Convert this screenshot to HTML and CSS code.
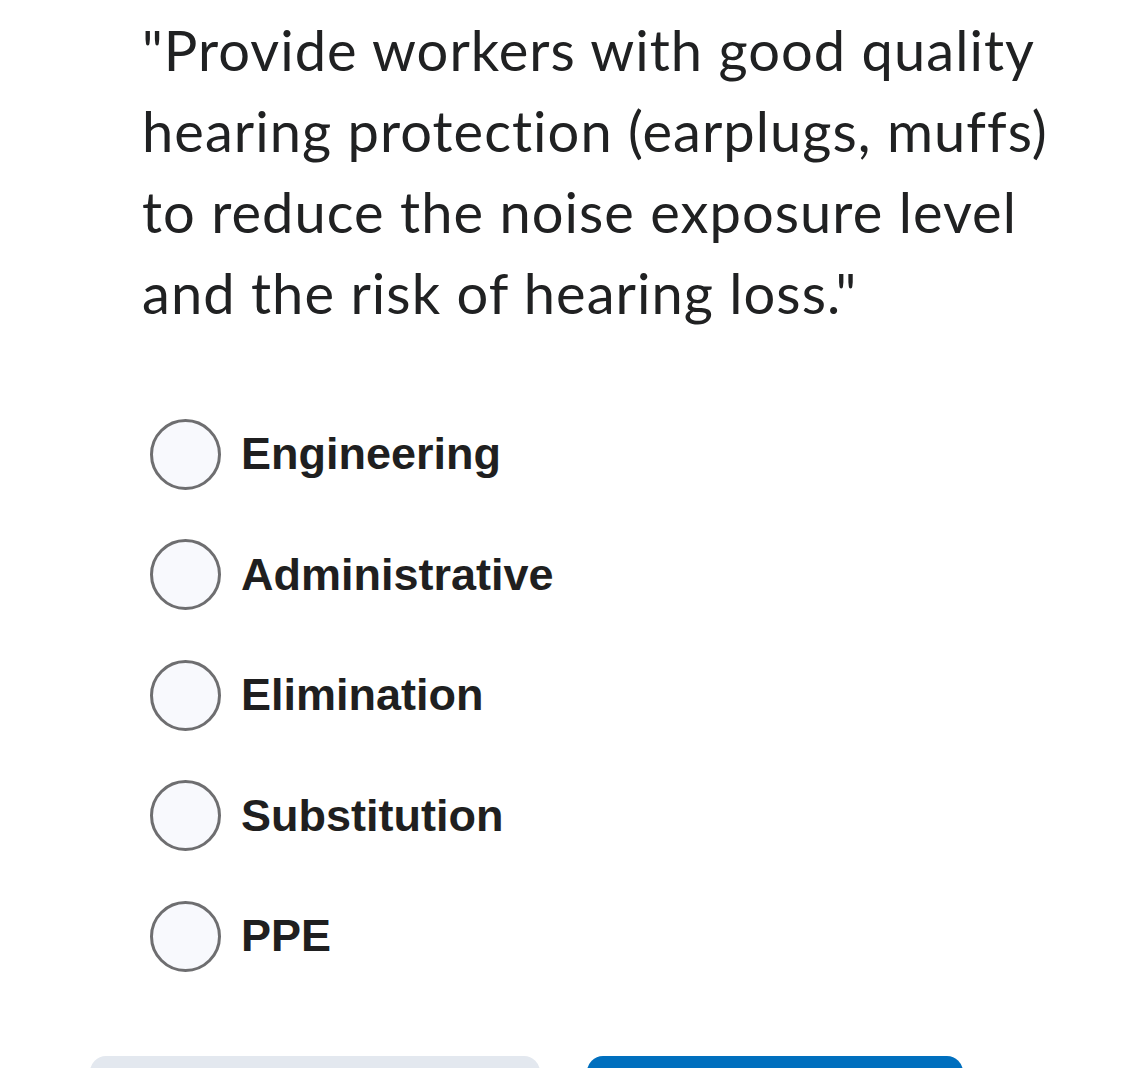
FILE: index.html
```html
<!DOCTYPE html>
<html lang="en">
<head>
<meta charset="utf-8">
<title>Question</title>
<link rel="stylesheet" href="styles.css">
</head>
<body>
<main class="page">
  <p class="question">"Provide workers with good quality hearing protection (earplugs, muffs) to reduce the noise exposure level and the risk of hearing loss."</p>
  <ul class="options">
    <li class="option"><span class="radio"></span><span class="label">Engineering</span></li>
    <li class="option"><span class="radio"></span><span class="label">Administrative</span></li>
    <li class="option"><span class="radio"></span><span class="label">Elimination</span></li>
    <li class="option"><span class="radio"></span><span class="label">Substitution</span></li>
    <li class="option"><span class="radio"></span><span class="label">PPE</span></li>
  </ul>
  <div class="actions">
    <button class="btn btn-secondary" type="button"></button>
    <button class="btn btn-primary" type="button"></button>
  </div>
</main>
</body>
</html>
```
FILE: styles.css
```css
html, body {
  margin: 0;
  padding: 0;
  background: #ffffff;
  overflow: hidden;
}
.page {
  padding: 9px 0 0 142px;
  height: 1068px;
  box-sizing: border-box;
}
.question {
  margin: 0;
  width: 960px;
  font-family: Lato, "Liberation Sans", sans-serif;
  font-size: 56px;
  line-height: 81px;
  letter-spacing: 1.05px;
  font-variant-ligatures: none;
  color: #202122;
}
.options {
  list-style: none;
  margin: 61px 0 0 0;
  padding: 0;
}
.option {
  display: flex;
  align-items: center;
  height: 120.5px;
  gap: 20px;
  margin-left: 8px;
}
.radio {
  width: 65px;
  height: 65px;
  border: 3px solid #6e6e70;
  border-radius: 50%;
  background: #f8f9fd;
  flex: none;
}
.label {
  font-family: "Liberation Sans", Arial, sans-serif;
  font-weight: 700;
  font-size: 45px;
  color: #1f1f20;
}
.actions {
  display: flex;
  gap: 47px;
  margin: 59px 0 0 -52px;
}
.btn {
  border: none;
  padding: 0;
  height: 60px;
  border-radius: 16px;
}
.btn-secondary {
  width: 450px;
  background: #e3e8ef;
}
.btn-primary {
  width: 376px;
  background: #006fbe;
}
```
